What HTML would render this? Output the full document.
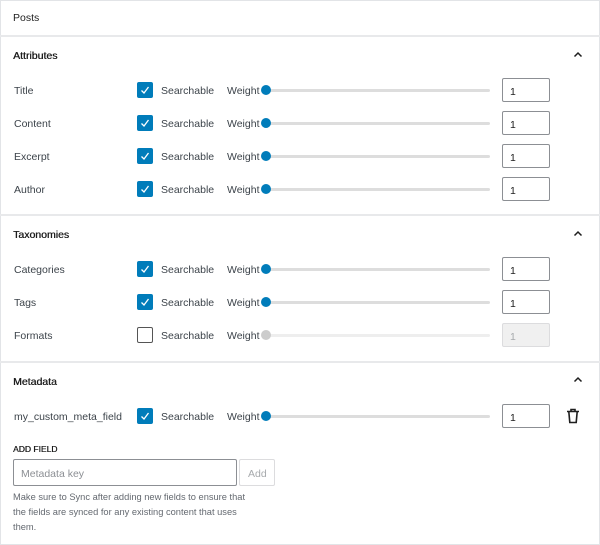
<!DOCTYPE html>
<html><head><style>
*{box-sizing:border-box;margin:0;padding:0}
body{width:600px;height:545px;background:#fff;font-family:"Liberation Sans",sans-serif;font-size:10.5px;color:#3c434a;position:relative;overflow:hidden}
.frame{position:absolute;left:0;top:0;width:600px;height:545px;border:1px solid #e2e4e7}
.hr{position:absolute;left:0;width:600px;height:2px;background:#e8e9eb}
.h{position:absolute;left:13px;color:#1e1e1e;font-size:10.5px;text-shadow:0.35px 0 0 #1e1e1e}
.chev{position:absolute;left:573px;width:10px;height:10px}
.row{position:absolute;left:0;width:600px;height:24px}
.row .lbl{position:absolute;left:14px;top:7px}
.cb{position:absolute;left:137px;top:4px;width:16px;height:16px;background:#007cba;border-radius:2px}
.cb.off{background:#fff;border:1px solid #555}
.cb svg{position:absolute;left:2px;top:2px}
.s{position:absolute;left:161px;top:7px}
.w{position:absolute;left:227px;top:7px}
.track{position:absolute;left:266px;top:11px;width:224px;height:3px;background:#dddddd;border-radius:2px}
.thumb{position:absolute;left:261px;top:7px;width:10px;height:10px;border-radius:50%;background:#007cba}
.row.dis .track{background:#eeeeee}.row.dis .thumb{background:#cccccc}
.num{position:absolute;left:502px;top:0;width:48px;height:24px;border:1px solid #8c8f94;border-radius:2px;padding:7px 0 0 7px;color:#1e1e1e}
.row.dis .num{background:#f0f0f0;border-color:#dcdcde;color:#a7aaad}
</style></head><body>
<div class="frame"></div>
<div class="h" style="top:12px;text-shadow:none">Posts</div>
<div class="hr" style="top:35px"></div>

<div class="h" style="top:50px">Attributes</div>
<svg class="chev" style="top:50px" viewBox="0 0 10 10"><path d="M1.5 6.5L5 3l3.5 3.5" fill="none" stroke="#1e1e1e" stroke-width="1.5"/></svg>

<div class="row" style="top:78px"><span class="lbl">Title</span><div class="cb"><svg width="12" height="12" viewBox="0 0 12 12"><path d="M2.5 6.5l2.5 2.5 4.5-6" fill="none" stroke="#fff" stroke-width="1.3"/></svg></div><span class="s">Searchable</span><span class="w">Weight</span><div class="track"></div><div class="thumb"></div><div class="num">1</div></div>
<div class="row" style="top:111px"><span class="lbl">Content</span><div class="cb"><svg width="12" height="12" viewBox="0 0 12 12"><path d="M2.5 6.5l2.5 2.5 4.5-6" fill="none" stroke="#fff" stroke-width="1.3"/></svg></div><span class="s">Searchable</span><span class="w">Weight</span><div class="track"></div><div class="thumb"></div><div class="num">1</div></div>
<div class="row" style="top:144px"><span class="lbl">Excerpt</span><div class="cb"><svg width="12" height="12" viewBox="0 0 12 12"><path d="M2.5 6.5l2.5 2.5 4.5-6" fill="none" stroke="#fff" stroke-width="1.3"/></svg></div><span class="s">Searchable</span><span class="w">Weight</span><div class="track"></div><div class="thumb"></div><div class="num">1</div></div>
<div class="row" style="top:177px"><span class="lbl">Author</span><div class="cb"><svg width="12" height="12" viewBox="0 0 12 12"><path d="M2.5 6.5l2.5 2.5 4.5-6" fill="none" stroke="#fff" stroke-width="1.3"/></svg></div><span class="s">Searchable</span><span class="w">Weight</span><div class="track"></div><div class="thumb"></div><div class="num">1</div></div>

<div class="hr" style="top:214px"></div>
<div class="h" style="top:229px">Taxonomies</div>
<svg class="chev" style="top:229px" viewBox="0 0 10 10"><path d="M1.5 6.5L5 3l3.5 3.5" fill="none" stroke="#1e1e1e" stroke-width="1.5"/></svg>

<div class="row" style="top:257px"><span class="lbl">Categories</span><div class="cb"><svg width="12" height="12" viewBox="0 0 12 12"><path d="M2.5 6.5l2.5 2.5 4.5-6" fill="none" stroke="#fff" stroke-width="1.3"/></svg></div><span class="s">Searchable</span><span class="w">Weight</span><div class="track"></div><div class="thumb"></div><div class="num">1</div></div>
<div class="row" style="top:290px"><span class="lbl">Tags</span><div class="cb"><svg width="12" height="12" viewBox="0 0 12 12"><path d="M2.5 6.5l2.5 2.5 4.5-6" fill="none" stroke="#fff" stroke-width="1.3"/></svg></div><span class="s">Searchable</span><span class="w">Weight</span><div class="track"></div><div class="thumb"></div><div class="num">1</div></div>
<div class="row dis" style="top:323px"><span class="lbl">Formats</span><div class="cb off"></div><span class="s">Searchable</span><span class="w">Weight</span><div class="track"></div><div class="thumb"></div><div class="num">1</div></div>

<div class="hr" style="top:361px"></div>
<div class="h" style="top:376px">Metadata</div>
<svg class="chev" style="top:375px" viewBox="0 0 10 10"><path d="M1.5 6.5L5 3l3.5 3.5" fill="none" stroke="#1e1e1e" stroke-width="1.5"/></svg>

<div class="row" style="top:404px"><span class="lbl">my_custom_meta_field</span><div class="cb"><svg width="12" height="12" viewBox="0 0 12 12"><path d="M2.5 6.5l2.5 2.5 4.5-6" fill="none" stroke="#fff" stroke-width="1.3"/></svg></div><span class="s">Searchable</span><span class="w">Weight</span><div class="track"></div><div class="thumb"></div><div class="num">1</div>
<svg style="position:absolute;left:566px;top:4px" width="14" height="16" viewBox="0 0 14 16"><path d="M1 3.5h12M5 3.5V1.5h4v2M2.8 3.5l1 11h6.4l1-11" fill="none" stroke="#1e1e1e" stroke-width="1.6"/></svg></div>

<div style="position:absolute;left:13px;top:444px;font-size:8.5px;color:#1e1e1e;text-shadow:0.3px 0 0 #1e1e1e">ADD FIELD</div>
<div style="position:absolute;left:13px;top:459px;width:224px;height:27px;border:1px solid #8c8f94;border-radius:2px;padding:8px 0 0 7px;color:#8c8f94">Metadata key</div>
<div style="position:absolute;left:239px;top:459px;width:36px;height:27px;border:1px solid #dcdcde;border-radius:2px;padding:8px 0 0 8px;color:#a7aaad">Add</div>
<div style="position:absolute;left:13px;top:490px;width:236px;font-size:9.3px;line-height:15px;color:#646970">Make sure to Sync after adding new fields to ensure that the fields are synced for any existing content that uses them.</div>
</body></html>
